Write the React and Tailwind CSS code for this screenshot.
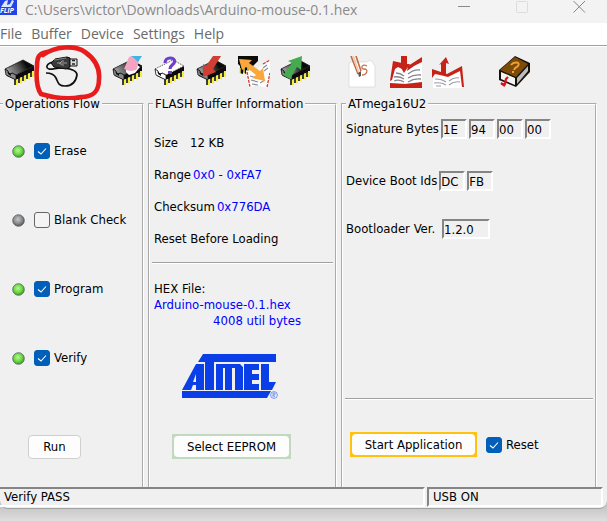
import { useState } from 'react';

const MENUS = ['File', 'Buffer', 'Device', 'Settings', 'Help'];

const STEPS = [
  { id: 'erase', label: 'Erase', enabled: true },
  { id: 'blank', label: 'Blank Check', enabled: false },
  { id: 'program', label: 'Program', enabled: true },
  { id: 'verify', label: 'Verify', enabled: true },
];

// Chip drawing shared by most toolbar icons
function Chip({ light }) {
  return (
    <g>
      <defs>
        <linearGradient id="chipTop" x1="0" y1="0.6" x2="1" y2="0.3">
          <stop offset="0" stopColor="#a6a6a6" />
          <stop offset="0.4" stopColor="#5c5c5c" />
          <stop offset="0.75" stopColor="#0a0a0a" />
        </linearGradient>
      </defs>
      <path d="M1 13 L3 20 L12 24 L30 15 V10 L12 19Z" fill="#0b0b0b" />
      <path d="M11 23v6M15 21v6M19 20v5M23 18v5M27 16v5" stroke="#111" strokeWidth="1.6" />
      <path d="M13 23v6M17 21.500v6M21 19.500v6M25 17.500v6M29 15v6" stroke="#f5ee40" strokeWidth="2" />
      <path d="M1 13 L19 4 L30 10 L12 19 L8 17 L6 18 L4 16 L4 15Z" fill={light ? '#fff' : 'url(#chipTop)'} stroke="#111" strokeWidth="0.8" strokeDasharray={light ? '1 1' : undefined} />
      <path d="M1 13 L4 15 L4 17 L7 18 L8 17 L12 19 V24 L2 19Z" fill={light ? '#fff' : '#8a8a8a'} stroke="#111" strokeWidth="0.8" />
      <path d="M4 16 L7 18 V20 L4 18Z" fill="#111" />
    </g>
  );
}

function UsbIcon() {
  return (
    <>
      <path d="M10 5 L4 7 C0 9 0 12 3 13 C6 14 12 11 18 12 C27 13 31 15 31 19 C30 25 27 30 19 30 C12 30 12 26 10 22 C8 18 5 17 0 17" fill="none" stroke="#111" strokeWidth="1.7" />
      <path d="M9 3 L21 1 L24 2 V11 L20 13 L8 11 L5 7Z" fill="#3a3a3a" stroke="#0a0a0a" />
      <path d="M8 4 L20 2" stroke="#999" strokeWidth="0.8" />
      <path d="M11 7h10M14 7l2-2h2M13 7l3 2h2" fill="none" stroke="#a5a5a5" strokeWidth="0.9" />
      <path d="M24 3h7v7h-7z" fill="#ddd" stroke="#111" />
      <path d="M26 4.500h3M26 8h3" stroke="#222" strokeWidth="1.4" />
    </>
  );
}

function EraseIcon() {
  return (
    <>
      <Chip />
      <path d="M14 11 L24 8 L28 11 L23 17 L17 19 L14 16Z" fill="#fff" />
      <path d="M17 1 L20 0 L27 3 L25 13 Q20 17 12 13Z" fill="#f4a3c0" />
      <path d="M19 0 H30 L26 6 L22 2Z" fill="#3db5e6" />
    </>
  );
}

function BlankIcon() {
  return (
    <>
      <Chip light />
      <path d="M11 7 C11 0 21.500 1 20.500 6 C20 9 16 9 16 13" fill="none" stroke="#7040c8" strokeWidth="3.2" />
      <path d="M14 15h4v3h-4z" fill="#7040c8" />
    </>
  );
}

function ProgramIcon() {
  return (
    <>
      <Chip />
      <path d="M17 0 H25 L17 13 L20 16 L7 21 L7 8 L10 10Z" fill="#cf3f33" />
    </>
  );
}

function VerifyIcon() {
  return (
    <>
      <path d="M0 0H20V5L14 11V14L11 12V16L8 14V18L5 16V18L2 17V10L0 8Z" fill="#0b0b0b" />
      <path d="M2 12v5M6 11v6M10 10v5" stroke="#efe64a" strokeWidth="1.4" />
      <path d="M9 15 L19 13 L32 5 V19 L29 32 L19 29 L11 32 L9 22Z" fill="#fff" />
      <path d="M9 16 L12 31 M29 31 L32 17 M25 8 L32 4" fill="none" stroke="#c83c30" strokeWidth="1.3" strokeDasharray="3 1" />
      <path d="M12 20l7 2M13 24l7 2M14 28l6 1M22 27l5-3M25 12l4-3M26 15l4-3" stroke="#8a8a98" strokeWidth="1.1" />
      <path d="M1 3 L14 4 L11 7 L22 15 L25 12 L27 25 L14 22 L18 19 L8 11 L4 14Z" fill="#faa83c" />
    </>
  );
}

function ReadIcon() {
  return (
    <>
      <Chip />
      <path d="M22 0 L21 14 L17 11 L10 23 L3 19 L12 7 L8 5Z" fill="#45aa50" />
    </>
  );
}

function EditIcon() {
  return (
    <>
      <path d="M1 7 L3 6 H18 L23 4 L27 10 V31 H1Z" fill="#fff" stroke="#d5d5d5" strokeWidth="0.7" />
      <path d="M3 0 L10 18 M8 0 L13 15" stroke="#bd6c48" strokeWidth="1.6" />
      <path d="M5 0 L11 17" stroke="#f2c7ab" strokeWidth="1.8" />
      <path d="M10 17 L13 15 L13 20 L11 21Z" fill="#555" />
      <path d="M19 10 C14 7 12 13 16 13 C21 13 19 19 14 19" fill="none" stroke="#c87252" strokeWidth="1.3" />
    </>
  );
}

function LoadHexIcon() {
  return (
    <>
      <path d="M4 7 L14 9 L19 12 L32 5 V27 H0 L3 12Z" fill="#fff" />
      <path d="M3 5 L12 7 L14 14 L8 11 L5 13 L2 24 L0 25Z" fill="#c62217" />
      <path d="M18 10 L32 1 V6 L24 10 L17 15Z" fill="#c62217" />
      <path d="M11 0h6v8h3l-6 9-5-9h2z" fill="#c62217" />
      <path d="M6 17q4 0 8 3M4 21q5-1 10 2M4 25q5-2 10 1M18 18q6-5 12-4M18 22q6-4 13-3M18 26q6-4 13-3" fill="none" stroke="#85858f" strokeWidth="1.3" />
      <path d="M0 27 L15 28 L32 26 V32 H0Z" fill="#c62217" />
    </>
  );
}

function SaveHexIcon() {
  return (
    <>
      <path d="M1 18 L10 17 L16 19 L29 12 L31 32 H1Z" fill="#fff" />
      <path d="M0 13 L9 16 L15 18 L30 10 L32 31 H30 L28 15 L16 21 L8 19 L3 18 L0 22Z" fill="#c62217" />
      <path d="M9 19 V8 L7 9 L14 1 L17 8 L14 7 V19Z" fill="#c62217" />
      <path d="M3 23q7 0 11 3M2 27q7-1 12 2M17 25q5-4 10-3M17 29q5-4 11-3M4 30h5" fill="none" stroke="#9c9ca8" strokeWidth="1.1" />
    </>
  );
}

function HelpBookIcon() {
  return (
    <>
      <path d="M17 0 L32 7 V16 L18 31 L1 24 V14Z" fill="#17100a" />
      <path d="M17 1 L30 8 L18 21 L2 14Z" fill="#7c4b08" />
      <path d="M3 16 L17 22 V29 L3 23Z" fill="#f4f4f4" />
      <path d="M19 22 L30 10 V15 L19 28Z" fill="#bdbdbd" />
      <path d="M13 9 C16 5 23 6 20 10 C18 12 17 11 16 14 M14 16 L16 16" fill="none" stroke="#f2a036" strokeWidth="1.9" />
      <path d="M10 21 L8 23 L7 28 L3 28 M3 27 L7 30" fill="none" stroke="#dc1414" strokeWidth="2.2" />
    </>
  );
}

function ToolButton({ label, className = '', children }) {
  return (
    <button type="button" aria-label={label} className={`h-8 w-8 shrink-0 ${className}`}>
      <svg viewBox="0 0 32 32" className="h-8 w-8">{children}</svg>
    </button>
  );
}

function Led({ on }) {
  return (
    <svg viewBox="0 0 13 13" className="h-[13px] w-[13px]">
      <defs>
        <radialGradient id={on ? 'ledOn' : 'ledOff'} cx="0.45" cy="0.4" r="0.65">
          <stop offset="0" stopColor={on ? '#b4fa96' : '#c8c8c8'} />
          <stop offset="0.55" stopColor={on ? '#6ad83e' : '#8c8c8c'} />
          <stop offset="1" stopColor={on ? '#2f8c14' : '#444'} />
        </radialGradient>
      </defs>
      <circle cx="6.500" cy="6.500" r="6.200" fill="#fff" />
      <circle cx="6.500" cy="6.500" r="5.800" fill={on ? 'url(#ledOn)' : 'url(#ledOff)'} stroke="#5b6870" strokeWidth="0.9" />
    </svg>
  );
}

function CheckBox({ label, checked, onChange }) {
  return (
    <label className="flex items-center gap-1">
      <span className="grid">
        <input
          type="checkbox"
          checked={checked}
          onChange={onChange}
          className="peer col-start-1 row-start-1 h-4 w-4 appearance-none rounded-[3px] border border-[#666] bg-[#f4f4f4] checked:border-[#005fb8] checked:bg-[#005fb8]"
        />
        <svg viewBox="0 0 16 16" className="pointer-events-none col-start-1 row-start-1 hidden h-4 w-4 peer-checked:block">
          <path d="M4 8.500 L7 11 L12 5.500" fill="none" stroke="#fff" strokeWidth="1.1" />
        </svg>
      </span>
      {label}
    </label>
  );
}

function Panel({ title, className = '', children }) {
  return (
    <fieldset className={`min-w-0 border-2 border-b-0 border-white [border-style:groove] ${className}`}>
      <legend className="ml-[3px] px-[2px]">{title}</legend>
      {children}
    </fieldset>
  );
}

function ByteField({ label, value, wide }) {
  return (
    <input
      readOnly
      aria-label={label}
      value={value}
      className={`h-5 border-2 border-t-[#858585] border-r-white border-b-white border-l-[#858585] bg-[#f0f0f0] outline-none ${wide ? 'w-12' : 'w-[26px]'}`}
    />
  );
}

function AtmelLogo() {
  return (
    <svg viewBox="0 0 96 45" className="ml-[10px] h-[45px] w-24" role="img" aria-label="Atmel">
      <g fill="#0a3fe8">
        <path d="M21 0 H94 V8 H16Z" />
        <path d="M14 10 H22 V36 H14 V31 H11 L9 36 H0Z" />
        <path d="M23 8 H32 V36 H23Z" />
        <path d="M34 10 H58 L61 13 V36 H53 V14 H50 V36 H43 V14 H41 V36 H34Z" />
        <path d="M62 10 H77 V16 H70 V20 H77 V26 H70 V30 H77 V36 H62Z" />
        <path d="M79 10 H87 V28 H94 L90 36 H79Z" />
        <path d="M0 37 H89 L85 44 H0Z" />
      </g>
      <path d="M14 20 L11 28 H14Z" fill="#efefef" />
      <circle cx="92" cy="41" r="3.400" fill="none" stroke="#5d7ee8" strokeWidth="0.8" />
      <path d="M91 43v-4h2v2h-2l2 2" fill="none" stroke="#5d7ee8" strokeWidth="0.7" />
    </svg>
  );
}

export default function App() {
  const [steps, setSteps] = useState(STEPS);
  const [reset, setReset] = useState(true);

  const toggleStep = (id) => {
    setSteps(steps.map(s => (s.id === id ? { ...s, enabled: !s.enabled } : s)));
  };

  return (
    <div className="min-h-screen overflow-hidden bg-linear-to-b from-[#c4c4c4] from-97% to-[#dedede] font-['DejaVu_Sans_Condensed','DejaVu_Sans',sans-serif] text-[13px] leading-4 text-black">
      <div className="rounded-b-lg border-b border-[#a0a0a0] bg-[#f0f0f0]">
        {/* Title bar */}
        <header className="flex h-[23px] items-start bg-[#f3f3f3] font-['Open_Sans',sans-serif] text-[#8a8a8a]">
          <svg viewBox="0 0 17 15" className="h-[15px] w-[17px] shrink-0">
            <path d="M0 0h17v15H0z" fill="#2343e6" />
            <path d="M1 7 L5 1 L8 0 L7 5 L10 4 L12 0 L14 1 L11 7Z" fill="#dfe6ff" />
            <text x="0" y="13" fontSize="7" fontWeight="bold" fontStyle="italic" fill="#fff">FLIP</text>
          </svg>
          <h1 className="ml-2 grow text-[14px] leading-[19px] whitespace-nowrap">C:\Users\victor\Downloads\Arduino-mouse-0.1.hex</h1>
          <button type="button" aria-label="Minimize" className="flex w-[58px] justify-center">
            <svg viewBox="0 0 13 14" className="h-[14px] w-[13px]"><path d="M0 6.500h12" stroke="#8a8a8a" /></svg>
          </button>
          <button type="button" aria-label="Maximize" className="flex w-[58px] justify-center">
            <svg viewBox="0 0 13 14" className="h-[14px] w-[13px]"><rect x="0.500" y="1.500" width="11" height="11" rx="1" fill="none" stroke="#dcdcdc" /></svg>
          </button>
          <button type="button" aria-label="Close" className="flex w-14 justify-center">
            <svg viewBox="0 0 13 14" className="h-[14px] w-[13px]"><path d="M0.500 1 L12 12.500 M12 1 L0.500 12.500" stroke="#858585" /></svg>
          </button>
        </header>

        <nav className="flex h-[23px] items-center gap-[9px] border-b border-[#a0a0a0] bg-white font-['Open_Sans',sans-serif] text-[14px] text-[#6a6a6a]">
          {MENUS.map(m => <button key={m} type="button">{m}</button>)}
        </nav>

        {/* Toolbar */}
        <div className="flex h-[50px] items-center gap-[10px] border-t border-white pl-1">
          <ToolButton label="Select device"><Chip /></ToolButton>
          <div className="relative flex">
            <ToolButton label="Connect USB"><UsbIcon /></ToolButton>
            <svg viewBox="0 0 70 56" className="pointer-events-none absolute -top-3 -left-3 h-14 w-[70px] max-w-none">
              <path d="M9 11 C21 2 41 1 51 8 C61 15 66 24 65 35 C65 48 59 53 47 53 C33 56 17 53 7 50 C2 43 2 33 3 22 C3 13 5 9 13 8" fill="none" stroke="#e81c1c" strokeWidth="4.6" strokeLinecap="round" />
            </svg>
          </div>
          <ToolButton label="Erase" className="ml-6"><EraseIcon /></ToolButton>
          <ToolButton label="Blank check"><BlankIcon /></ToolButton>
          <ToolButton label="Program"><ProgramIcon /></ToolButton>
          <ToolButton label="Verify"><VerifyIcon /></ToolButton>
          <ToolButton label="Read"><ReadIcon /></ToolButton>
          <ToolButton label="Edit buffer" className="ml-[26px]"><EditIcon /></ToolButton>
          <ToolButton label="Load HEX file"><LoadHexIcon /></ToolButton>
          <ToolButton label="Save HEX file"><SaveHexIcon /></ToolButton>
          <ToolButton label="Help" className="ml-6"><HelpBookIcon /></ToolButton>
        </div>

        <main className="grid grid-cols-[144fr_189fr_256fr] gap-1 pr-[10px]">
          <Panel title="Operations Flow" className="border-l-0">
            <div className="flex flex-col gap-[45px] pt-[27px] pl-3">
              {steps.map(s => (
                <div key={s.id} className="flex h-6 items-center gap-[9px]">
                  <Led on={s.enabled} />
                  <CheckBox label={s.label} checked={s.enabled} onChange={() => toggleStep(s.id)} />
                </div>
              ))}
            </div>
            <button type="button" className="mt-[65px] mb-7 ml-7 h-6 w-[53px] rounded-[4px] border border-[#cfcfcf] bg-[#fdfdfd]">Run</button>
          </Panel>

          <Panel title="FLASH Buffer Information">
            <dl className="flex flex-col gap-4 pt-[23px] pl-1">
              <div className="flex gap-3"><dt>Size</dt><dd>12 KB</dd></div>
              <div className="flex gap-[2px]"><dt>Range</dt><dd className="text-[#0000ff]">0x0 - 0xFA7</dd></div>
              <div className="flex gap-[2px]"><dt>Checksum</dt><dd className="text-[#0000ff]">0x776DA</dd></div>
              <div><dt>Reset Before Loading</dt></div>
            </dl>
            <hr className="mx-[2px] mt-[15px] border-t border-b border-t-[#a0a0a0] border-b-white" />
            <div className="mt-[17px] pl-1">
              <p>HEX File:</p>
              <p className="text-[#0000ff]">Arduino-mouse-0.1.hex</p>
              <p className="pr-[34px] text-right text-[#0000ff]">4008 util bytes</p>
            </div>
            <div className="mt-[25px] flex flex-col items-start gap-[35px] pl-[22px]">
              <AtmelLogo />
              <button type="button" className="h-[25px] w-[119px] border-2 border-[#c0d9c0] bg-[#c0d9c0]">
                <span className="block rounded-[4px] bg-[#fdfdfd] pt-[3px] pb-[2px]">Select EEPROM</span>
              </button>
            </div>
          </Panel>

          <Panel title="ATmega16U2">
            <div className="pt-[7px] pl-[3px]">
              <div className="flex items-center gap-[2px]">
                <span className="min-w-[91px] whitespace-nowrap">Signature Bytes</span>
                <ByteField label="Signature byte 1" value="1E" />
                <ByteField label="Signature byte 2" value="94" />
                <ByteField label="Signature byte 3" value="00" />
                <ByteField label="Signature byte 4" value="00" />
              </div>
              <div className="mt-8 flex items-center gap-[2px]">
                <span className="min-w-[89px] whitespace-nowrap">Device Boot Ids</span>
                <ByteField label="Boot id 1" value="DC" />
                <ByteField label="Boot id 2" value="FB" />
              </div>
              <div className="mt-7 flex items-center gap-[2px]">
                <span className="min-w-[94px] whitespace-nowrap">Bootloader Ver.</span>
                <ByteField label="Bootloader version" value="1.2.0" wide />
              </div>
            </div>
            <hr className="mx-[2px] mt-[159px] border-t border-b border-t-[#a0a0a0] border-b-white" />
            <div className="mt-8 flex items-center gap-[9px] pl-[7px]">
              <button type="button" className="h-[25px] w-[127px] border-2 border-[#ffc20e] bg-[#ffc20e]">
                <span className="block rounded-[4px] bg-[#fdfdfd] pt-[3px] pb-[2px]">Start Application</span>
              </button>
              <CheckBox label="Reset" checked={reset} onChange={() => setReset(!reset)} />
            </div>
          </Panel>
        </main>

        {/* Status bar */}
        <footer className="grid grid-cols-[425fr_176fr] gap-[2px] pr-1 pb-[1px]">
          <div className="border-2 border-t-[#858585] border-r-white border-b-white border-l-0 pl-1">Verify PASS</div>
          <div className="border-2 border-t-[#858585] border-r-white border-b-white border-l-[#858585] pl-1">USB ON</div>
        </footer>
      </div>
    </div>
  );
}
